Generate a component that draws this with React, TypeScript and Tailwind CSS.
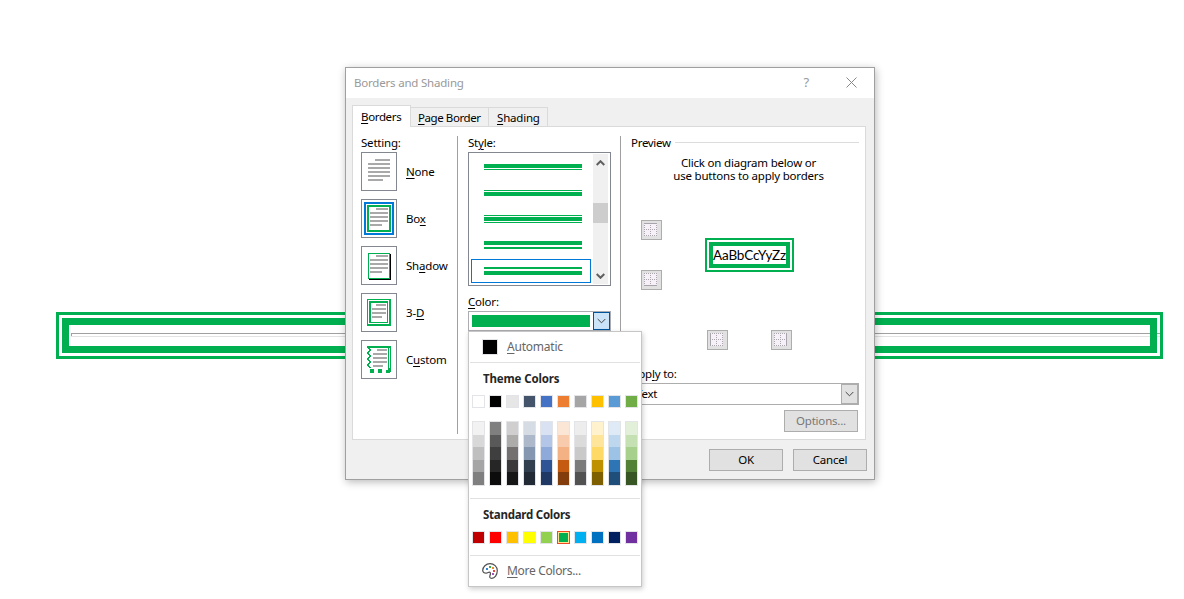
import React from "react";

type Edge = "top" | "bottom" | "left" | "right";

function U({ children }: { children: React.ReactNode }) {
  return <span className="underline decoration-1 underline-offset-2">{children}</span>;
}

type Bar = [number, number, number];

function Lines({ rows }: { rows: Bar[] }) {
  return (
    <>
      {rows.map(([x, y, w]) => (
        <rect key={y} x={x} y={y} width={w} height="2" fill="#a9a9a9" />
      ))}
    </>
  );
}

const pageLines: Bar[] = [[14, 8, 12], [8, 12, 18], [8, 16, 18], [8, 20, 18], [8, 24, 12]];

const settings: { label: React.ReactNode; art: React.ReactNode }[] = [
  {
    label: <><U>N</U>one</>,
    art: <Lines rows={[[13, 6, 15], [6, 10, 22], [6, 14, 22], [6, 18, 22], [6, 22, 22], [6, 26, 15]]} />,
  },
  {
    label: <>Bo<U>x</U></>,
    art: (
      <>
        <rect x="3" y="3" width="28" height="31" fill="none" stroke="#0078d7" strokeWidth="2" />
        <rect x="6" y="6" width="22" height="25" fill="none" stroke="#00b050" strokeWidth="2" />
        <Lines rows={pageLines} />
      </>
    ),
  },
  {
    label: <>Sh<U>a</U>dow</>,
    art: (
      <>
        <path d="M28.5 7v25.5H7" fill="none" stroke="#000" />
        <rect x="6.5" y="6.5" width="21" height="25" fill="none" stroke="#00b050" />
        <Lines rows={pageLines} />
      </>
    ),
  },
  {
    label: <>3-<U>D</U></>,
    art: (
      <>
        <path d="M5 5h24v27H5zM6 6v24h21V6z" fill="#00b050" fillRule="evenodd" />
        <path d="M7 7h19v22H7zM9 9v19h16V9z" fill="#00b050" fillRule="evenodd" />
        <Lines rows={[[14, 10, 10], [10, 14, 14], [10, 18, 14], [10, 22, 10]]} />
      </>
    ),
  },
  {
    label: <>C<U>u</U>stom</>,
    art: (
      <>
        <path d="M5 5h24v2H5zM26 7h1v20h-1zM28 7h1v21h-1z" fill="#00b050" />
        <path d="M8 28h4v4H8zM16 28h4v4h-4zM24 29h2v-2h3v4h-1v1h-4z" fill="#00b050" />
        <path d="M6.5 7l2 2-3 3 3 3-3 3 3 3-3 3 3 3" fill="none" stroke="#00b050" />
        <Lines rows={[[15, 8, 10], [11, 12, 14], [11, 16, 14], [11, 20, 14], [11, 24, 10]]} />
      </>
    ),
  },
];

function Chevron({ up = false, className = "" }: { up?: boolean; className?: string }) {
  return (
    <svg width="9" height="6" viewBox="0 0 9 6" className={className} fill="none" stroke="currentColor">
      <path d={up ? "M.7 5L4.5 1.2 8.3 5" : "M.7 1L4.5 4.8 8.3 1"} />
    </svg>
  );
}

function EdgeButton({ edge }: { edge: Edge }) {
  const solid = { top: "M0 .5h13", bottom: "M0 12.5h13", left: "M.5 0v13", right: "M12.5 0v13" }[edge];
  return (
    <button className="flex h-5 w-[21px] border border-[#adadad] bg-[#e1e1e1] pt-0.5 pl-0.5">
      <svg width="13" height="13" viewBox="0 0 13 13" fill="none">
        <path d="M0 0h13v13H0z" fill="#f6f1f8" />
        <path
          d="M0 .5h13M0 6.5h13M0 12.5h13M.5 0v13M6.5 0v13M12.5 0v13"
          stroke="#aca5ae"
          strokeDasharray="1 1"
        />
        <path d={solid} stroke="#a9a3ab" />
      </svg>
    </button>
  );
}

const themeColors: { base: string; shades: string[] }[] = [
  { base: "#ffffff", shades: ["#f2f2f2", "#d8d8d8", "#bfbfbf", "#a5a5a5", "#7f7f7f"] },
  { base: "#000000", shades: ["#7f7f7f", "#595959", "#3f3f3f", "#262626", "#0c0c0c"] },
  { base: "#e7e6e6", shades: ["#d0cece", "#aeabab", "#757070", "#3a3838", "#171616"] },
  { base: "#44546a", shades: ["#d6dce4", "#adb9ca", "#8496b0", "#323f4f", "#222a35"] },
  { base: "#4472c4", shades: ["#d9e2f3", "#b4c6e7", "#8eaadb", "#2f5496", "#1f3864"] },
  { base: "#ed7d31", shades: ["#fbe5d5", "#f7cbac", "#f4b183", "#c55a11", "#833c0b"] },
  { base: "#a5a5a5", shades: ["#ededed", "#dbdbdb", "#c9c9c9", "#7b7b7b", "#525252"] },
  { base: "#ffc000", shades: ["#fff2cc", "#fee599", "#ffd965", "#bf9000", "#7f6000"] },
  { base: "#5b9bd5", shades: ["#deebf6", "#bdd7ee", "#9cc3e5", "#2e75b5", "#1e4e79"] },
  { base: "#70ad47", shades: ["#e2efd9", "#c5e0b3", "#a8d08d", "#538135", "#375623"] },
];

const standardColors = [
  "#c00000", "#ff0000", "#ffc000", "#ffff00", "#92d050",
  "#00b050", "#00b0f0", "#0070c0", "#002060", "#7030a0",
];

function Swatch({ color, selected = false }: { color: string; selected?: boolean }) {
  return (
    <div
      className={
        selected
          ? "size-[13px] border border-[#f04a24] bg-[#ffe294] p-px"
          : "size-[13px] border border-[#e2e4e7]"
      }
    >
      <div className="size-full" style={{ backgroundColor: color }} />
    </div>
  );
}

function ColorMenu() {
  return (
    <div className="absolute top-[331px] left-[468px] flex h-64 w-[174px] flex-col border border-[#c6c6c6] bg-white px-px text-[#666] shadow-[1px_2px_5px_rgba(0,0,0,0.2)]">
      <div className="flex h-[30px] items-center pl-3">
        <span className="size-4 border border-[#e2e4e7] bg-black" />
        <span className="ml-[9px] text-[12px] tracking-[-0.22px]"><U>A</U>utomatic</span>
      </div>
      <div className="h-px shrink-0 bg-[#e1e1e1]" />
      <div className="flex h-8 items-center pl-[13px] text-[11.5px] font-bold tracking-[-0.15px] text-[#262626]">Theme Colors</div>
      <div className="flex gap-1 pl-0.5">
        {themeColors.map((c) => <Swatch key={c.base} color={c.base} />)}
      </div>
      <div className="mt-[13px] flex gap-1 pl-0.5">
        {themeColors.map((c) => (
          <div key={c.base} className="flex h-[65px] w-[13px] flex-col border border-[#e2e4e7]">
            {c.shades.map((s) => <div key={s} className="flex-1" style={{ backgroundColor: s }} />)}
          </div>
        ))}
      </div>
      <div className="mt-3 h-px shrink-0 bg-[#e1e1e1]" />
      <div className="flex h-8 items-center pl-[13px] text-[11.5px] font-bold tracking-[-0.25px] text-[#262626]">Standard Colors</div>
      <div className="flex gap-1 pl-0.5">
        {standardColors.map((c) => <Swatch key={c} color={c} selected={c === "#00b050"} />)}
      </div>
      <div className="mt-[11px] h-px shrink-0 bg-[#e1e1e1]" />
      <div className="flex h-[30px] items-center pl-3">
        <svg width="16" height="16" viewBox="0 0 16 16" fill="none">
          <path
            d="M.7 7.600C.7 3.800 4 .7 8 .7s7.300 2.900 7.300 6.900c0 4.300-2.600 7.600-5.600 7.700-1.900 0-2.300-1.300-1.700-2.800.6-1.500.9-2.700-.2-3.300-1.200-.6-1.800 1-3.600 1C2.200 10.200.7 9.200.7 7.600z"
            stroke="#505050"
            strokeWidth="1.200"
          />
          <path d="M4 5h2v2H4z" fill="#2b88d8" />
          <path d="M7 3h2v2H7z" fill="#35a853" />
          <path d="M10 4h2v2h-2z" fill="#f08a24" />
          <path d="M11 7h2v2h-2z" fill="#e8453c" />
          <path d="M10 10h2v2h-2z" fill="#a64fbf" />
        </svg>
        <span className="ml-[9px] text-[12px] tracking-[-0.32px]"><U>M</U>ore Colors...</span>
      </div>
    </div>
  );
}

function DocumentBorder() {
  return (
    <div className="mt-[312px] ml-14 h-[47px] w-[1107px] border-3 border-[#00b050] p-[3px]">
      <div className="flex h-full border-7 border-[#00b050] pt-[8px] pl-0.5">
        <div className="h-1 flex-1 border-t border-b border-t-[#a0a0a0] border-b-[#e3e3e3]">
          <div className="h-0.5 w-px bg-[#a0a0a0]" />
        </div>
        <div className="-mr-[10px] ml-[7px] h-1 w-[3px] border-t border-b border-t-[#a0a0a0] border-b-[#e3e3e3]" />
      </div>
    </div>
  );
}

function SettingColumn() {
  return (
    <div className="w-[97px] pt-2 pl-2">
      <div className="mb-px h-4 leading-4">Setting:</div>
      <div className="flex flex-col gap-2">
        {settings.map((s, i) => (
          <div key={i} className="flex h-[39px] items-center gap-[9px]">
            <div className="h-[39px] w-9 border border-[#828790]">
              <svg width="34" height="37" viewBox="0 0 34 37" shapeRendering="crispEdges">{s.art}</svg>
            </div>
            <span>{s.label}</span>
          </div>
        ))}
      </div>
    </div>
  );
}

function StyleColumn() {
  return (
    <div className="w-[153px] pt-2">
      <div className="mb-px h-4 leading-4">St<U>y</U>le:</div>
      <div className="flex h-[134px] w-[143px] justify-between border border-[#828790] py-px pr-0.5 pl-0.5">
        <div className="flex w-[120px] flex-col">
          <div className="mt-2.5 pr-[9px] pl-[13px]">
            <div className="h-1 bg-[#00b050]" />
            <div className="mt-px h-px bg-[#00b050]" />
          </div>
          <div className="mt-5 pr-[9px] pl-[13px]">
            <div className="h-px bg-[#00b050]" />
            <div className="mt-px h-1 bg-[#00b050]" />
          </div>
          <div className="mt-[19px] pr-[9px] pl-[13px]">
            <div className="h-px bg-[#00b050]" />
            <div className="my-px h-1 bg-[#00b050]" />
            <div className="h-px bg-[#00b050]" />
          </div>
          <div className="mt-[18px] pr-[9px] pl-[13px]">
            <div className="h-1 bg-[#00b050]" />
            <div className="mt-0.5 h-0.5 bg-[#00b050]" />
          </div>
          <div className="mt-2.5 h-6 border border-[#0078d7] pt-[7px] pr-2 pl-3">
            <div className="h-0.5 bg-[#00b050]" />
            <div className="mt-0.5 h-1 bg-[#00b050]" />
          </div>
        </div>
        <div className="flex h-[130px] w-[15px] flex-col items-center bg-[#f0f0f0] text-[#606060]">
          <Chevron up className="mt-1.5 stroke-2" />
          <div className="mt-[37px] h-5 w-full bg-[#cdcdcd]" />
          <Chevron className="mt-auto mb-[5px] stroke-2" />
        </div>
      </div>
      <div className="mt-2 mb-px h-4 leading-4"><U>C</U>olor:</div>
      <div className="flex h-5 w-[143px] justify-between border border-[#abadb3] pl-[3px]">
        <div className="mt-[3px] h-3 w-[118px] bg-[#00b050]" />
        <div className="flex h-[18px] w-[17px] items-center justify-center border border-[#005499] bg-[#cce4f7] text-[#444]">
          <Chevron />
        </div>
      </div>
    </div>
  );
}

function PreviewColumn() {
  return (
    <div className="flex w-[228px] flex-col pt-2">
      <div className="flex h-4 leading-4">
        <span className="w-11 tracking-[-0.3px]">Preview</span>
        <span className="mt-[7px] h-px flex-1 bg-[#dcdcdc]" />
      </div>
      <div className="mt-[5px] ml-[7px] text-center leading-[13px]">
        Click on diagram below or
        <br />
        use buttons to apply borders
      </div>
      <div className="mt-[38px] flex h-[70px] pl-2.5">
        <div className="flex flex-col justify-between">
          <EdgeButton edge="top" />
          <EdgeButton edge="bottom" />
        </div>
        <div className="mt-[18px] ml-[43px] h-[34px] w-[89px] border-2 border-[#00b050] p-0.5">
          <div className="flex h-full items-center justify-center border-4 border-[#00b050] font-[Lato] text-[13.5px] leading-[18px] tracking-[-0.15px] whitespace-nowrap">
            AaBbCcYyZz
          </div>
        </div>
      </div>
      <div className="mt-10 flex gap-[43px] pl-[76px]">
        <EdgeButton edge="left" />
        <EdgeButton edge="right" />
      </div>
      <div className="mt-4 h-[17px] leading-4">App<U>l</U>y to:</div>
      <div className="flex h-[22px] items-center justify-between border border-[#adadad] pl-1">
        <span>Text</span>
        <span className="flex h-5 w-[17px] items-center justify-center border border-[#adadad] bg-[#e1e1e1] text-[#444]">
          <Chevron />
        </span>
      </div>
      <button className="mt-[5px] mr-px h-[22px] w-[74px] self-end border border-[#adadad] bg-[#e1e1e1] text-[#777]">
        Options...
      </button>
    </div>
  );
}

function Dialog() {
  return (
    <div className="absolute top-[67px] left-[345px] h-[413px] w-[530px] border border-[#a0a0a0] bg-[#f0f0f0] shadow-[1px_2px_8px_rgba(0,0,0,0.28)]">
      <div className="flex h-[30px] items-center bg-white pl-2 text-[#999]">
        <span className="flex-1">Borders and Shading</span>
        <span className="mr-[37px] text-[13px]">?</span>
        <svg width="11" height="11" viewBox="0 0 11 11" className="mr-[17px] mb-0.5" stroke="#888">
          <path d="M.5.5l10 10M10.500.5l-10 10" />
        </svg>
      </div>
      <div className="flex h-7 items-end pl-1.5">
        <div className="relative -mb-px h-[22px] w-[59px] border border-b-0 border-[#dadada] bg-white pl-2 leading-[21px] tracking-[-0.35px]"><U>B</U>orders</div>
        <div className="h-[19px] w-[78px] border-t border-r border-[#dadada] pl-[7px] leading-[19px] tracking-[-0.42px]"><U>P</U>age Border</div>
        <div className="h-[19px] w-[59px] border-t border-r border-[#dadada] pl-2 leading-[19px]"><U>S</U>hading</div>
      </div>
      <div className="ml-1.5 flex h-[314px] w-[514px] border border-[#dadada] bg-white">
        <SettingColumn />
        <div className="mt-[9px] ml-[7px] h-[298px] w-px bg-[#a0a0a0]" />
        <div className="w-2.5" />
        <StyleColumn />
        <div className="-ml-px mt-[9px] h-[298px] w-px bg-[#a0a0a0]" />
        <div className="w-2.5" />
        <PreviewColumn />
      </div>
      <div className="mt-[9px] flex justify-end gap-2.5 pr-[7px]">
        <button className="h-[22px] w-[74px] border border-[#adadad] bg-[#e1e1e1]">OK</button>
        <button className="h-[22px] w-[74px] border border-[#adadad] bg-[#e1e1e1]">Cancel</button>
      </div>
    </div>
  );
}

export default function App() {
  return (
    <div className="relative flex h-[599px] w-[1184px] overflow-hidden bg-white font-['Noto_Sans',sans-serif] text-[11.5px] tracking-[-0.2px] whitespace-nowrap text-black">
      <DocumentBorder />
      <Dialog />
      <ColorMenu />
    </div>
  );
}
